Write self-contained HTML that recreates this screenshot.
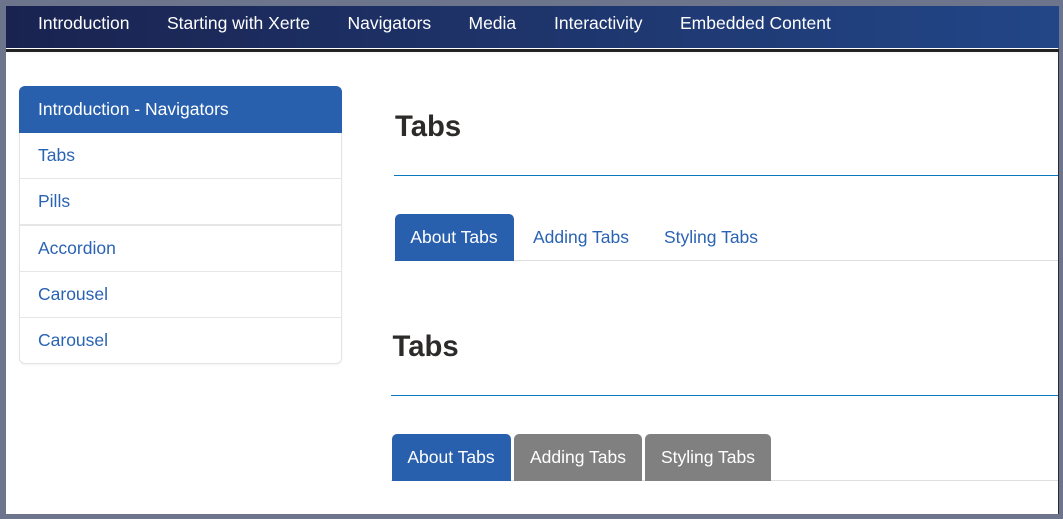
<!DOCTYPE html>
<html>
<head>
<meta charset="utf-8">
<style>
html,body{margin:0;padding:0;width:1063px;height:519px;overflow:hidden;background:#6d758c;font-family:"Liberation Sans",sans-serif}
.a{position:absolute;white-space:nowrap}
#white{left:6px;top:48px;width:1052px;height:466px;background:#fff}
#fade{left:6px;top:52px;width:1052px;height:5px;background:linear-gradient(#f9f9f9,#fff)}
#rline{left:1058px;top:49px;width:1px;height:465px;background:#2b2b33}
#nav{left:6px;top:6px;width:1053px;height:42px;background:linear-gradient(90deg,#1a2350 0%,#224687 100%)}
#sep{left:6px;top:49px;width:1053px;height:3px;background:#222}
.n{top:13px;color:#fff;font-size:17.5px;line-height:20px}
#panel{left:19px;top:86px;width:321px;height:276px;border:1px solid #e4e4e4;border-radius:6px;background:#fff;box-shadow:0 1px 2px rgba(0,0,0,.05)}
#ph{left:19px;top:86px;width:323px;height:47px;background:#2860ae;border-radius:6px 6px 0 0;color:#fff;font-size:17.5px;line-height:46px;text-indent:19px}
.li{left:38px;color:#2b63b3;font-size:17.5px;line-height:20px}
.hr{left:20px;width:321px;height:1px;background:#e6e6e6}
.h{color:#2d2b2a;font-weight:bold;font-size:29.3px;line-height:36px}
.rule{height:1px;background:#0c78c0}
.tabline{height:1px;background:#dedede}
.tab{height:47px;border-radius:5px 5px 0 0;color:#fff;font-size:17.5px;line-height:46px;text-align:center}
.blue{background:#2860ae}
.gray{background:#808080}
.lnk{color:#2b63b3;font-size:17.5px;line-height:20px}
</style>
</head>
<body>
<div class="a" id="white"></div>
<div class="a" id="fade"></div>
<div class="a" id="rline"></div>
<div class="a" id="nav"></div>
<div class="a" id="sep"></div>
<div class="a n" style="left:38px">Introduction</div>
<div class="a n" style="left:167px">Starting with Xerte</div>
<div class="a n" style="left:347.5px">Navigators</div>
<div class="a n" style="left:468.5px">Media</div>
<div class="a n" style="left:554px">Interactivity</div>
<div class="a n" style="left:680px">Embedded Content</div>

<div class="a" id="panel"></div>
<div class="a" id="ph">Introduction - Navigators</div>
<div class="a li" style="top:145px">Tabs</div>
<div class="a hr" style="top:178px"></div>
<div class="a li" style="top:191px">Pills</div>
<div class="a hr" style="top:224px;height:2px"></div>
<div class="a li" style="top:238px">Accordion</div>
<div class="a hr" style="top:271px"></div>
<div class="a li" style="top:284px">Carousel</div>
<div class="a hr" style="top:317px"></div>
<div class="a li" style="top:330px">Carousel</div>

<div class="a h" style="left:395px;top:109px">Tabs</div>
<div class="a rule" style="left:394px;top:175px;width:664px"></div>
<div class="a tabline" style="left:394px;top:260px;width:664px"></div>
<div class="a tab blue" style="left:394.5px;top:214px;width:119px">About Tabs</div>
<div class="a lnk" style="left:533px;top:227px">Adding Tabs</div>
<div class="a lnk" style="left:664px;top:227px">Styling Tabs</div>

<div class="a h" style="left:392.5px;top:329px">Tabs</div>
<div class="a rule" style="left:391px;top:395px;width:667px"></div>
<div class="a tabline" style="left:391px;top:480px;width:667px"></div>
<div class="a tab blue" style="left:391.5px;top:434px;width:119px">About Tabs</div>
<div class="a tab gray" style="left:514px;top:434px;width:128px">Adding Tabs</div>
<div class="a tab gray" style="left:645px;top:434px;width:126px">Styling Tabs</div>
</body>
</html>
